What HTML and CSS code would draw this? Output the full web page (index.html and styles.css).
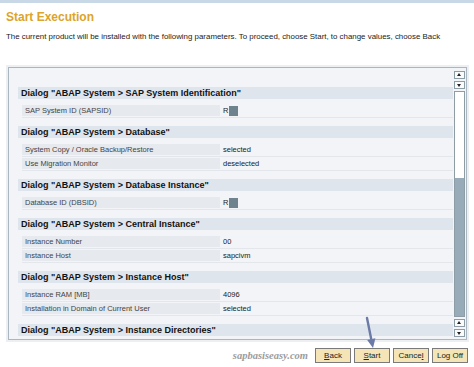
FILE: index.html
```html
<!DOCTYPE html>
<html lang="en">
<head>
  <meta charset="UTF-8">
  <title>Start Execution</title>
  <link rel="stylesheet" href="styles.css">
</head>
<body>

  <div class="topbar"></div>

  <h1 class="title">Start Execution</h1>
  <p class="intro">The current product will be installed with the following parameters. To proceed, choose Start, to change values, choose Back</p>

  <div class="panel">
    <div class="panel-body">

      <div class="section">
        <div class="dialog">Dialog "ABAP System &gt; SAP System Identification"</div>
        <div class="row"><div class="label">SAP System ID (SAPSID)</div><div class="value">R<span class="mask"></span></div></div>
      </div>

      <div class="section">
        <div class="dialog">Dialog "ABAP System &gt; Database"</div>
        <div class="row"><div class="label">System Copy / Oracle Backup/Restore</div><div class="value">selected</div></div>
        <div class="row"><div class="label">Use Migration Monitor</div><div class="value">deselected</div></div>
      </div>

      <div class="section">
        <div class="dialog">Dialog "ABAP System &gt; Database Instance"</div>
        <div class="row"><div class="label">Database ID (DBSID)</div><div class="value">R<span class="mask"></span></div></div>
      </div>

      <div class="section">
        <div class="dialog">Dialog "ABAP System &gt; Central Instance"</div>
        <div class="row"><div class="label">Instance Number</div><div class="value">00</div></div>
        <div class="row"><div class="label">Instance Host</div><div class="value">sapcivm</div></div>
      </div>

      <div class="section">
        <div class="dialog">Dialog "ABAP System &gt; Instance Host"</div>
        <div class="row"><div class="label">Instance RAM [MB]</div><div class="value">4096</div></div>
        <div class="row"><div class="label">Installation in Domain of Current User</div><div class="value">selected</div></div>
      </div>

      <div class="section">
        <div class="dialog">Dialog "ABAP System &gt; Instance Directories"</div>
      </div>

    </div>

    <!-- SAP style scrollbar: arrows at both ends -->
    <div class="scrollbar">
      <div class="sb-btn up"></div>
      <div class="sb-btn down"></div>
      <div class="sb-track">
        <div class="sb-space"></div>
        <div class="sb-thumb"></div>
      </div>
      <div class="sb-btn up"></div>
      <div class="sb-btn down"></div>
    </div>
  </div>

  <div class="footer">
    <span class="watermark">sapbasiseasy.com</span>
    <button type="button" class="btn"><u>B</u>ack</button>
    <button type="button" class="btn"><u>S</u>tart</button>
    <button type="button" class="btn">Cance<u>l</u></button>
    <button type="button" class="btn">Log Off</button>

    <svg class="pointer" width="22" height="34" viewBox="0 0 22 34">
      <line x1="9" y1="2" x2="13.4" y2="24" stroke="#6c7aa8" stroke-width="2.4" stroke-linecap="round"/>
      <polygon points="15,32 17.4,22.2 9.2,23.9" fill="#6c7aa8"/>
    </svg>
  </div>

</body>
</html>
```

FILE: styles.css
```css
body {
  margin: 0;
  font-family: "Liberation Sans", Arial, sans-serif;
  background-color: #ffffff;
  color: #333;
}
.topbar {
  height: 3px;
  background-color: #c9d8e7;
}
.title {
  margin: 7px 0 0 6px;
  font-size: 12px;
  line-height: 14px;
  font-weight: bold;
  color: #dca42a;
}
.intro {
  margin: 8px 0 0 6px;
  font-size: 7.9px;
  line-height: 10px;
  color: #222;
}
.panel {
  display: flex;
  box-sizing: border-box;
  width: 459px;
  height: 273px;
  margin: 25px 0 0 8px;
  border: 1px solid #aab7c1;
  background-color: #f2f4f7;
  box-shadow: 0 0 0 2px #edf0f3;
}
.panel-body {
  flex: 1;
  overflow: hidden;
  padding: 19px 1px 0 9px;
}
.section {
  margin-bottom: 8px;
}
.dialog {
  height: 12px;
  line-height: 12px;
  padding-left: 3px;
  margin-bottom: 5px;
  background-color: #dfe5ec;
  font-size: 9px;
  font-weight: bold;
  color: #111;
  white-space: nowrap;
}
.row {
  display: grid;
  grid-template-columns: 198px 1fr;
  height: 14px;
  margin-left: 4px;
  box-sizing: border-box;
  border-bottom: 1px solid #e3e7ec;
  font-size: 7.5px;
}
.label {
  margin: 1px 0;
  padding-left: 3px;
  line-height: 11px;
  background-color: #e6e9ee;
  color: #444;
}
.value {
  padding-left: 3px;
  line-height: 13px;
  color: #222;
}
.mask {
  display: inline-block;
  width: 9px;
  height: 10px;
  margin-left: 1px;
  vertical-align: -3px;
  background-color: #6f838e;
}
.scrollbar {
  display: flex;
  flex-direction: column;
  gap: 2px;
  width: 11px;
  margin-right: 1px;
  padding: 3px 0 2px;
}
.sb-btn {
  position: relative;
  box-sizing: border-box;
  height: 8px;
  border: 1px solid #8e9ca6;
  background-color: #fafbfc;
}
.sb-btn::after {
  content: "";
  position: absolute;
  left: 2px;
  top: 1px;
  border-left: 2.5px solid transparent;
  border-right: 2.5px solid transparent;
}
.sb-btn.up::after {
  border-bottom: 3px solid #222;
}
.sb-btn.down::after {
  top: 2px;
  border-top: 3px solid #222;
}
.sb-track {
  flex: 1;
  display: flex;
  flex-direction: column;
  border: 1px solid #8e9ca6;
  background-color: #ffffff;
}
.sb-space {
  height: 86px;
}
.sb-thumb {
  flex: 1;
  background-color: #97acb8;
}
.footer {
  position: relative;
  display: flex;
  justify-content: flex-end;
  align-items: center;
  gap: 3px;
  padding: 8px 6px 0 0;
}
.watermark {
  margin-right: 4px;
  font-family: "Liberation Serif", serif;
  font-size: 10.5px;
  font-style: italic;
  font-weight: bold;
  color: #9c9c9c;
}
.btn {
  box-sizing: border-box;
  width: 36px;
  height: 15px;
  padding: 0;
  border: 1px solid #7a7a7a;
  border-radius: 0;
  background-color: #f4e4b6;
  font-family: "Liberation Sans", Arial, sans-serif;
  font-size: 8px;
  color: #222;
  cursor: pointer;
}
.pointer {
  position: absolute;
  left: 358px;
  top: -24px;
}
```
